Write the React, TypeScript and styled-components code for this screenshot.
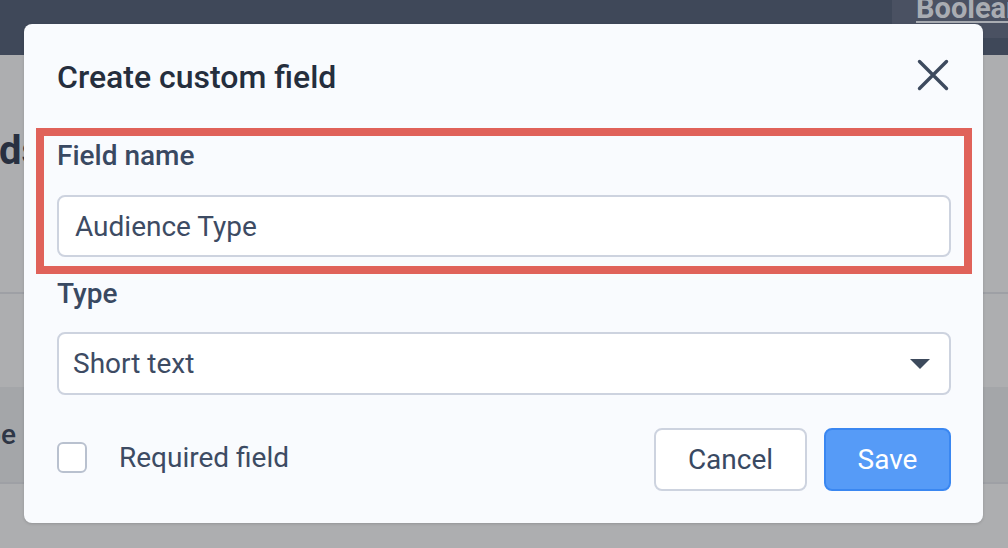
import React from "react";
import styled, { createGlobalStyle } from "styled-components";

const GlobalStyle = createGlobalStyle`
  html, body {
    margin: 0;
    padding: 0;
    background: #adaeb0;
    font-family: Roboto, "Liberation Sans", Arial, sans-serif;
    overflow: hidden;
  }
  * { box-sizing: border-box; }
`;

const Page = styled.div`
  width: 1008px;
  height: 548px;
  position: relative;
  display: flex;
  flex-direction: column;
`;

const TopBar = styled.header`
  height: 55px;
  background: #3f4859;
  display: flex;
  justify-content: flex-end;
  align-items: flex-start;
`;

const TabChip = styled.div`
  width: 116px;
  height: 38px;
  background: #4a5162;
  display: flex;
  align-items: flex-start;
  padding-left: 24px;
  overflow: hidden;
`;

const TabLink = styled.a`
  font-size: 29px;
  font-weight: 700;
  color: #a9acb2;
  text-decoration: underline;
  text-decoration-thickness: 2px;
  text-underline-offset: 3px;
  white-space: nowrap;
  line-height: 29px;
  margin-top: -6px;
`;

const ClipRow = styled.div<{ $w: number }>`
  width: ${(p) => p.$w}px;
  display: flex;
  justify-content: flex-end;
  white-space: nowrap;
`;

const PageHeading = styled.h1`
  margin: 72px 0 0;
  font-size: 40px;
  line-height: 48px;
  font-weight: 700;
  color: #283040;
`;

const Table = styled.div`
  margin-top: 117px;
  border-top: 2px solid #9ea0a5;
  display: flex;
  flex-direction: column;
`;

const BlankRow = styled.div`
  height: 93px;
`;

const HeadRow = styled.div`
  height: 97px;
  background: #a4a6a9;
  border-bottom: 2px solid #9ea0a5;
  display: flex;
  align-items: center;
`;

const HeadCell = styled.span`
  font-size: 28px;
  font-weight: 500;
  color: #2e3646;
`;

const Modal = styled.div`
  position: absolute;
  left: 24px;
  top: 24px;
  width: 959px;
  height: 499px;
  background: #f9fbfe;
  border-radius: 8px;
  box-shadow: 0 1px 3px rgba(0, 0, 0, 0.15);
  padding: 0 11px 32px 12px;
  display: flex;
  flex-direction: column;
`;

const ModalHeader = styled.div`
  height: 104px;
  display: flex;
  align-items: center;
  justify-content: space-between;
  padding: 2px 21px 0 21px;
`;

const Title = styled.h2`
  margin: 0;
  font-size: 32px;
  line-height: 38px;
  font-weight: 500;
  color: #252e3d;
`;

const CloseButton = styled.button`
  width: 32px;
  height: 32px;
  padding: 0;
  border: none;
  background: transparent;
  display: flex;
  align-items: center;
  justify-content: center;
  margin-right: 2px;
  margin-top: -5px;
  cursor: pointer;
`;

const Highlight = styled.div`
  border: 8px solid #e0625a;
  padding: 4px 13px 9px 13px;
  display: flex;
  flex-direction: column;
`;

const Field = styled.div<{ $pad?: boolean }>`
  display: flex;
  flex-direction: column;
  padding: ${(p) => (p.$pad ? "4px 21px 0 21px" : "0")};
`;

const Label = styled.label`
  font-size: 28px;
  line-height: 32px;
  font-weight: 500;
  color: #394962;
`;

const TextInput = styled.div`
  margin-top: 23px;
  height: 62px;
  background: #ffffff;
  border: 2px solid #cdd3df;
  border-radius: 8px;
  display: flex;
  align-items: center;
  padding: 0 16px;
  font-size: 28px;
  color: #3d4b63;
`;

const SelectBox = styled.div`
  margin-top: 22px;
  height: 63px;
  background: #ffffff;
  border: 2px solid #cdd3df;
  border-radius: 8px;
  display: flex;
  align-items: center;
  justify-content: space-between;
  padding: 0 19px 0 14px;
  font-size: 28px;
  color: #3d4b63;
`;

const Footer = styled.div`
  margin-top: 33px;
  padding: 0 21px;
  display: flex;
  align-items: center;
  justify-content: space-between;
`;

const CheckRow = styled.label`
  display: flex;
  align-items: center;
  gap: 32px;
  font-size: 28px;
  color: #3d4b63;
  margin-top: -4px;
`;

const CheckBox = styled.span`
  width: 30px;
  height: 31px;
  border: 2px solid #b9c1cf;
  border-radius: 6px;
  background: #ffffff;
`;

const Buttons = styled.div`
  display: flex;
  gap: 17px;
`;

const Button = styled.button<{ $primary?: boolean; $w: number }>`
  width: ${(p) => p.$w}px;
  height: 63px;
  border-radius: 8px;
  font-family: Roboto, "Liberation Sans", Arial, sans-serif;
  font-size: 28px;
  padding: 0;
  border: 2px solid ${(p) => (p.$primary ? "#3a87f1" : "#cdd3df")};
  background: ${(p) => (p.$primary ? "#569bf7" : "#ffffff")};
  color: ${(p) => (p.$primary ? "#ffffff" : "#394962")};
`;

export default function App() {
  return (
    <>
      <GlobalStyle />
      <Page>
        <TopBar>
          <TabChip>
            <TabLink>Boolean</TabLink>
          </TabChip>
        </TopBar>
        <ClipRow $w={42}>
          <PageHeading>Custom fields</PageHeading>
        </ClipRow>
        <Table>
          <BlankRow />
          <HeadRow>
            <ClipRow $w={16}>
              <HeadCell>Type</HeadCell>
            </ClipRow>
          </HeadRow>
        </Table>
        <Modal>
          <ModalHeader>
            <Title>Create custom field</Title>
            <CloseButton aria-label="Close">
              <svg width="32" height="32" viewBox="0 0 32 32">
                <path
                  d="M2.5 2.5 L29.5 29.5 M29.5 2.5 L2.5 29.5"
                  stroke="#3d4a5e"
                  strokeWidth="3.4"
                  strokeLinecap="round"
                  fill="none"
                />
              </svg>
            </CloseButton>
          </ModalHeader>
          <Highlight>
            <Field>
              <Label>Field name</Label>
              <TextInput>Audience Type</TextInput>
            </Field>
          </Highlight>
          <Field $pad>
            <Label>Type</Label>
            <SelectBox>
              <span>Short text</span>
              <svg width="20" height="10" viewBox="0 0 20 10">
                <path d="M0 0 L20 0 L10 10 Z" fill="#3d4a5c" />
              </svg>
            </SelectBox>
          </Field>
          <Footer>
            <CheckRow>
              <CheckBox />
              Required field
            </CheckRow>
            <Buttons>
              <Button $w={153}>Cancel</Button>
              <Button $w={127} $primary>
                Save
              </Button>
            </Buttons>
          </Footer>
        </Modal>
      </Page>
    </>
  );
}
